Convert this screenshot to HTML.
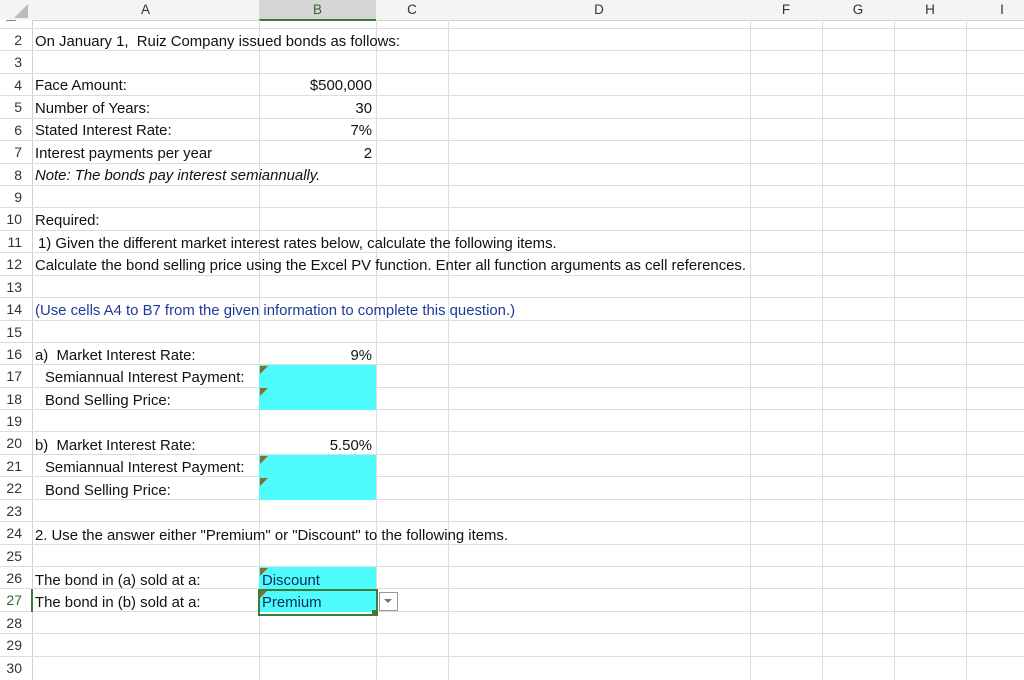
<!DOCTYPE html><html><head><style>
body{margin:0;width:1024px;height:677px;overflow:hidden;background:#fff;font-family:"Liberation Sans",Arial,sans-serif;position:relative}
.a{position:absolute}
.hl{position:absolute;left:0;width:1024px;height:1px;background:#dcdcdc}
.vl{position:absolute;top:20px;width:1px;height:660px;background:#dcdcdc}
.t{position:absolute;font-size:14.9px;color:#111;white-space:nowrap;line-height:22px;top:1px}
.rn{position:absolute;left:0;width:22px;text-align:right;font-size:14px;color:#333;line-height:22px}
.ch{position:absolute;top:0;height:20px;line-height:20px;text-align:center;font-size:13.5px;color:#333}
.cy{position:absolute;left:259px;width:117px;background:#4efbfd}
.tri{position:absolute;width:0;height:0;border-top:8px solid #8a6a2a;border-right:8px solid transparent}
</style></head><body>
<div class="a" style="left:0;top:0;width:1024px;height:20px;background:#f4f4f4;border-bottom:1px solid #d0d0d0"></div>
<div class="a" style="left:0;top:20px;width:32px;height:660px;background:#fff;border-right:1px solid #d0d0d0"></div>
<div class="a" style="left:14px;top:4px;width:0;height:0;border-bottom:14px solid #bcbcbc;border-left:14px solid transparent"></div>
<div class="a" style="left:259px;top:0;width:117px;height:19px;background:#d6d6d6;border-bottom:2px solid #3f7a3a"></div>
<div class="ch" style="left:32px;width:227px">A</div>
<div class="ch" style="left:259px;width:117px;color:#2e6b2a">B</div>
<div class="ch" style="left:376px;width:72px">C</div>
<div class="ch" style="left:448px;width:302px">D</div>
<div class="ch" style="left:750px;width:72px">F</div>
<div class="ch" style="left:822px;width:72px">G</div>
<div class="ch" style="left:894px;width:72px">H</div>
<div class="ch" style="left:966px;width:72px">I</div>
<div class="vl" style="left:259px"></div><div class="vl" style="left:376px"></div><div class="vl" style="left:448px"></div><div class="vl" style="left:750px"></div><div class="vl" style="left:822px"></div><div class="vl" style="left:894px"></div><div class="vl" style="left:966px"></div>
<div class="hl" style="top:28px"></div><div class="hl" style="top:50px"></div><div class="hl" style="top:73px"></div><div class="hl" style="top:95px"></div><div class="hl" style="top:118px"></div><div class="hl" style="top:140px"></div><div class="hl" style="top:163px"></div><div class="hl" style="top:185px"></div><div class="hl" style="top:207px"></div><div class="hl" style="top:230px"></div><div class="hl" style="top:252px"></div><div class="hl" style="top:275px"></div><div class="hl" style="top:297px"></div><div class="hl" style="top:320px"></div><div class="hl" style="top:342px"></div><div class="hl" style="top:364px"></div><div class="hl" style="top:387px"></div><div class="hl" style="top:409px"></div><div class="hl" style="top:431px"></div><div class="hl" style="top:454px"></div><div class="hl" style="top:476px"></div><div class="hl" style="top:499px"></div><div class="hl" style="top:521px"></div><div class="hl" style="top:544px"></div><div class="hl" style="top:566px"></div><div class="hl" style="top:588px"></div><div class="hl" style="top:611px"></div><div class="hl" style="top:633px"></div><div class="hl" style="top:656px"></div>
<div class="a" style="left:6px;top:20px;width:10px;height:1px;background:#888"></div>
<div class="rn" style="top:29px">2</div><div class="rn" style="top:51px">3</div><div class="rn" style="top:74px">4</div><div class="rn" style="top:96px">5</div><div class="rn" style="top:119px">6</div><div class="rn" style="top:141px">7</div><div class="rn" style="top:164px">8</div><div class="rn" style="top:186px">9</div><div class="rn" style="top:208px">10</div><div class="rn" style="top:231px">11</div><div class="rn" style="top:253px">12</div><div class="rn" style="top:276px">13</div><div class="rn" style="top:298px">14</div><div class="rn" style="top:321px">15</div><div class="rn" style="top:343px">16</div><div class="rn" style="top:365px">17</div><div class="rn" style="top:388px">18</div><div class="rn" style="top:410px">19</div><div class="rn" style="top:432px">20</div><div class="rn" style="top:455px">21</div><div class="rn" style="top:477px">22</div><div class="rn" style="top:500px">23</div><div class="rn" style="top:522px">24</div><div class="rn" style="top:545px">25</div><div class="rn" style="top:567px">26</div><div class="rn" style="top:589px;color:#2e6b2a">27</div><div class="rn" style="top:612px">28</div><div class="rn" style="top:634px">29</div><div class="rn" style="top:657px">30</div>
<div class="cy" style="top:365px;height:45px"></div>
<div class="cy" style="top:455px;height:45px"></div>
<div class="cy" style="top:567px;height:45px"></div>
<div class="tri" style="left:260px;top:366px"></div><div class="tri" style="left:260px;top:388px"></div>
<div class="tri" style="left:260px;top:456px"></div><div class="tri" style="left:260px;top:478px"></div>
<div class="tri" style="left:260px;top:568px"></div><div class="tri" style="left:260px;top:590px"></div>
<div class="a" style="left:258px;top:589px;width:116px;height:23px;border:2px solid #3f7a3a"></div>
<div class="a" style="left:372px;top:610px;width:5px;height:5px;background:#3f7a3a"></div>
<div class="a" style="left:379px;top:592px;width:17px;height:17px;border:1px solid #999;background:#fff"></div>
<div class="a" style="left:384px;top:599px;width:0;height:0;border-top:4px solid #777;border-left:4px solid transparent;border-right:4px solid transparent"></div>
<div class="t" style="left:35px;top:31px">On January 1,&nbsp; Ruiz Company issued bonds as follows:</div>
<div class="t" style="left:35px;top:75px">Face Amount:</div><div class="t" style="right:652px;top:75px">$500,000</div>
<div class="t" style="left:35px;top:98px">Number of Years:</div><div class="t" style="right:652px;top:98px">30</div>
<div class="t" style="left:35px;top:120px">Stated Interest Rate:</div><div class="t" style="right:652px;top:120px">7%</div>
<div class="t" style="left:35px;top:143px">Interest payments per year</div><div class="t" style="right:652px;top:143px">2</div>
<div class="t" style="left:35px;top:165px;font-style:italic">Note: The bonds pay interest semiannually.</div>
<div class="t" style="left:35px;top:210px">Required:</div>
<div class="t" style="left:38px;top:233px">1) Given the different market interest rates below, calculate the following items.</div>
<div class="t" style="left:35px;top:255px">Calculate the bond selling price using the Excel PV function. Enter all function arguments as cell references.</div>
<div class="t" style="left:35px;top:300px;color:#1f3a9a">(Use cells A4 to B7 from the given information to complete this question.)</div>
<div class="t" style="left:35px;top:345px">a)&nbsp; Market Interest Rate:</div><div class="t" style="right:652px;top:345px">9%</div>
<div class="t" style="left:45px;top:367px">Semiannual Interest Payment:</div>
<div class="t" style="left:45px;top:390px">Bond Selling Price:</div>
<div class="t" style="left:35px;top:435px">b)&nbsp; Market Interest Rate:</div><div class="t" style="right:652px;top:435px">5.50%</div>
<div class="t" style="left:45px;top:457px">Semiannual Interest Payment:</div>
<div class="t" style="left:45px;top:480px">Bond Selling Price:</div>
<div class="t" style="left:35px;top:525px">2. Use the answer either "Premium" or "Discount" to the following items.</div>
<div class="t" style="left:35px;top:570px">The bond in (a) sold at a:</div><div class="t" style="left:262px;top:570px;color:#0a2a5a">Discount</div>
<div class="t" style="left:35px;top:592px">The bond in (b) sold at a:</div><div class="t" style="left:262px;top:592px;color:#0a2a5a">Premium</div>
<div class="a" style="left:31px;top:589px;width:2px;height:23px;background:#3f7a3a"></div>
</body></html>
